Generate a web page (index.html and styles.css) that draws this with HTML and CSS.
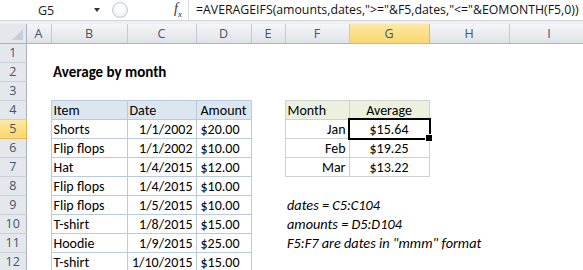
FILE: index.html
```html
<!DOCTYPE html>
<html lang="en">
<head>
    <meta charset="UTF-8">
    <meta name="viewport" content="width=device-width, initial-scale=1.0">
    <title>Average by month</title>
    <link rel="stylesheet" href="styles.css">
</head>
<body>
    <div class="formula-bar">
        <div class="name-box">
            <span class="name-text">G5</span>
            <span class="dropdown"></span>
        </div>
        <div class="tools">
            <span class="grip"></span>
            <span class="fx"><i>f</i><sub>x</sub></span>
        </div>
        <div class="formula">=AVERAGEIFS(amounts,dates,"&gt;="&amp;F5,dates,"&lt;="&amp;EOMONTH(F5,0))</div>
    </div>
    <div class="bar-gap"></div>

    <table class="sheet">
        <colgroup>
            <col class="w-hdr">
            <col class="w-a">
            <col class="w-b">
            <col class="w-c">
            <col class="w-d">
            <col class="w-e">
            <col class="w-f">
            <col class="w-g">
            <col class="w-h">
            <col class="w-i">
        </colgroup>
        <thead>
            <tr>
                <th class="corner"><span class="corner-mark"></span></th>
                <th class="col">A</th>
                <th class="col">B</th>
                <th class="col">C</th>
                <th class="col">D</th>
                <th class="col">E</th>
                <th class="col">F</th>
                <th class="col sel">G</th>
                <th class="col">H</th>
                <th class="col">I</th>
            </tr>
        </thead>
        <tbody>
            <tr>
                <th class="row">1</th>
                <td></td><td></td><td></td><td></td><td></td><td></td><td></td><td></td><td></td>
            </tr>
            <tr>
                <th class="row">2</th>
                <td></td><td class="title">Average by month</td><td></td><td></td><td></td><td></td><td></td><td></td><td></td>
            </tr>
            <tr>
                <th class="row">3</th>
                <td></td><td></td><td></td><td></td><td></td><td></td><td></td><td></td><td></td>
            </tr>
            <tr>
                <th class="row">4</th>
                <td></td>
                <td class="t1 head">Item</td>
                <td class="t1 head">Date</td>
                <td class="t1 head money">Amount</td>
                <td></td>
                <td class="t2 head">Month</td>
                <td class="t2 head center">Average</td>
                <td></td><td></td>
            </tr>
            <tr>
                <th class="row sel">5</th>
                <td></td>
                <td class="t1">Shorts</td>
                <td class="t1 right">1/1/2002</td>
                <td class="t1 money">$20.00</td>
                <td></td>
                <td class="t2 right">Jan</td>
                <td class="t2 center active">$15.64</td>
                <td></td><td></td>
            </tr>
            <tr>
                <th class="row">6</th>
                <td></td>
                <td class="t1">Flip flops</td>
                <td class="t1 right">1/1/2002</td>
                <td class="t1 money">$10.00</td>
                <td></td>
                <td class="t2 right">Feb</td>
                <td class="t2 center">$19.25</td>
                <td></td><td></td>
            </tr>
            <tr>
                <th class="row">7</th>
                <td></td>
                <td class="t1">Hat</td>
                <td class="t1 right">1/4/2015</td>
                <td class="t1 money">$12.00</td>
                <td></td>
                <td class="t2 right">Mar</td>
                <td class="t2 center">$13.22</td>
                <td></td><td></td>
            </tr>
            <tr>
                <th class="row">8</th>
                <td></td>
                <td class="t1">Flip flops</td>
                <td class="t1 right">1/4/2015</td>
                <td class="t1 money">$10.00</td>
                <td></td><td></td><td></td><td></td><td></td>
            </tr>
            <tr>
                <th class="row">9</th>
                <td></td>
                <td class="t1">Flip flops</td>
                <td class="t1 right">1/5/2015</td>
                <td class="t1 money">$10.00</td>
                <td></td>
                <td class="note">dates = C5:C104</td>
                <td></td><td></td><td></td>
            </tr>
            <tr>
                <th class="row">10</th>
                <td></td>
                <td class="t1">T-shirt</td>
                <td class="t1 right">1/8/2015</td>
                <td class="t1 money">$15.00</td>
                <td></td>
                <td class="note">amounts = D5:D104</td>
                <td></td><td></td><td></td>
            </tr>
            <tr>
                <th class="row">11</th>
                <td></td>
                <td class="t1">Hoodie</td>
                <td class="t1 right">1/9/2015</td>
                <td class="t1 money">$25.00</td>
                <td></td>
                <td class="note">F5:F7 are dates in "mmm" format</td>
                <td></td><td></td><td></td>
            </tr>
            <tr>
                <th class="row">12</th>
                <td></td>
                <td class="t1">T-shirt</td>
                <td class="t1 right">1/10/2015</td>
                <td class="t1 money">$15.00</td>
                <td></td><td></td><td></td><td></td><td></td>
            </tr>
        </tbody>
    </table>
</body>
</html>
```

FILE: styles.css
```css
* {
    margin: 0;
    padding: 0;
    box-sizing: border-box;
}

body {
    width: 583px;
    height: 270px;
    overflow: hidden;
    background: #fff;
    font-family: "Carlito", "Lato", sans-serif;
    color: #000;
}

/* formula bar */

.formula-bar {
    display: flex;
    height: 21px;
    border-bottom: 1px solid #d1d5da;
}

.name-box {
    width: 110px;
    display: flex;
    align-items: center;
    font-family: "Open Sans", sans-serif;
    font-size: 12.5px;
    color: #222;
}

.name-text {
    width: 92px;
    text-align: center;
}

.dropdown {
    width: 0;
    height: 0;
    margin-left: 2px;
    border-left: 3.5px solid transparent;
    border-right: 3.5px solid transparent;
    border-top: 4px solid #333;
}

.tools {
    width: 78px;
    display: flex;
    align-items: center;
    justify-content: space-between;
    padding-right: 6px;
}

.grip {
    width: 16px;
    height: 16px;
    margin-left: 2px;
    border-radius: 50%;
    border: 1px solid #c4c9d0;
    background: radial-gradient(circle at 50% 40%, #fff 30%, #e3e6ea 100%);
}

.fx {
    font-family: "Liberation Serif", serif;
    font-size: 14px;
    color: #333;
}

.fx sub {
    font-size: 9px;
    font-style: italic;
}

.formula {
    flex: 1;
    border-left: 1px solid #d6d9de;
    padding-left: 7px;
    font-family: "Open Sans", sans-serif;
    font-size: 12.3px;
    line-height: 20px;
    white-space: nowrap;
    color: #111;
}

.bar-gap {
    height: 3px;
    background: #eef0f3;
}

/* grid */

.sheet {
    border-collapse: collapse;
    table-layout: fixed;
    width: 589px;
}

.w-hdr { width: 26px; }
.w-a { width: 25px; }
.w-b { width: 76px; }
.w-c { width: 69px; }
.w-d { width: 55px; }
.w-e { width: 34px; }
.w-f { width: 64px; }
.w-g { width: 80px; }
.w-h { width: 80px; }
.w-i { width: 80px; }

tr {
    height: 19px;
}

th {
    font-family: "Open Sans", sans-serif;
    font-weight: normal;
    font-size: 12.5px;
    color: #44546a;
    text-align: center;
    vertical-align: middle;
}

.corner {
    position: relative;
    background: #e4e8ed;
    border-right: 1px solid #a9b3bf;
    border-bottom: 1px solid #a9b3bf;
}

.corner-mark {
    position: absolute;
    right: 3px;
    bottom: 3px;
    width: 0;
    height: 0;
    border-left: 11px solid transparent;
    border-bottom: 11px solid #c9ced6;
}

.col {
    background: linear-gradient(#f4f5f7, #dfe3e8);
    border-right: 1px solid #c5cad2;
    border-bottom: 1px solid #a9b3bf;
}

.row {
    background: #e4e8ed;
    border-right: 1px solid #a9b3bf;
    border-bottom: 1px solid #c9cfd7;
}

th.sel {
    background: linear-gradient(#fde9a4, #f9d66f);
    border-color: #efb44c;
}

td {
    padding: 1px 2px 0 2px;
    font-size: 14px;
    line-height: 17px;
    white-space: nowrap;
    overflow: visible;
    vertical-align: middle;
}

.title {
    font-size: 15px;
    font-weight: bold;
}

.t1 {
    border: 1px solid #b9cbe0;
}

.t1.head {
    background: #dce6f1;
}

.money {
    padding-left: 4px;
}

.t2 {
    border: 1px solid #d0d0d0;
}

.t2.head {
    background: #ebf1de;
}

.right {
    text-align: right;
    padding-right: 3px;
}

.center {
    text-align: center;
}

.note {
    font-size: 14.3px;
    font-style: italic;
}

.active {
    position: relative;
}

.active::after {
    content: "";
    position: absolute;
    left: -2px;
    top: -2px;
    right: -2px;
    bottom: -2px;
    border: 2px solid #000;
}

.active::before {
    content: "";
    position: absolute;
    right: -4px;
    bottom: -4px;
    width: 6px;
    height: 6px;
    background: #000;
    border: 1px solid #fff;
    z-index: 1;
}
```
